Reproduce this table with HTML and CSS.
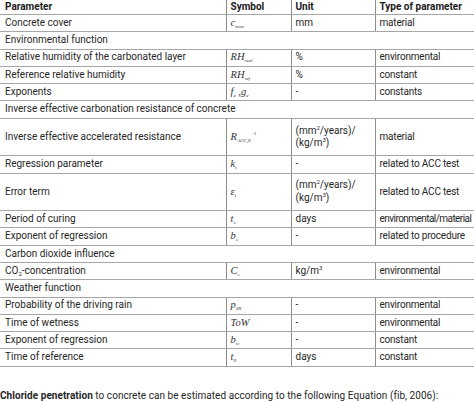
FILE: index.html
```html
<!DOCTYPE html>
<html lang="en">
<head>
<meta charset="utf-8">
<title>Carbonation model parameters</title>
<link rel="stylesheet" href="styles.css">
</head>
<body>
<table class="params">
  <colgroup>
    <col class="c-param">
    <col class="c-sym">
    <col class="c-unit">
    <col class="c-type">
  </colgroup>
  <thead>
    <tr class="head">
      <th>Parameter</th><th>Symbol</th><th>Unit</th><th class="type">Type of parameter</th>
    </tr>
  </thead>
  <tbody>
    <tr><td>Concrete cover</td><td class="sym"><i>c</i><sub>nom</sub></td><td>mm</td><td class="type">material</td></tr>
    <tr class="section"><td colspan="4">Environmental function</td></tr>
    <tr><td>Relative humidity of the carbonated layer</td><td class="sym"><i>RH</i><sub>real</sub></td><td>%</td><td class="type">environmental</td></tr>
    <tr><td>Reference relative humidity</td><td class="sym"><i>RH</i><sub>ref</sub></td><td>%</td><td class="type">constant</td></tr>
    <tr><td>Exponents</td><td class="sym"><i>f</i><sub>e</sub> <i>,g</i><sub>e</sub></td><td>-</td><td class="type">constants</td></tr>
    <tr class="section"><td colspan="4">Inverse effective carbonation resistance of concrete</td></tr>
    <tr class="tall"><td>Inverse effective accelerated resistance</td><td class="sym"><i>R</i><sub>ACC,0</sub><sup>-1</sup></td><td>(mm<sup>2</sup>/years)/<br>(kg/m<sup>3</sup>)</td><td class="type">material</td></tr>
    <tr><td>Regression parameter</td><td class="sym"><i>k</i><sub>t</sub></td><td>-</td><td class="type">related to ACC test</td></tr>
    <tr class="tall"><td>Error term</td><td class="sym"><i>ε</i><sub>t</sub></td><td>(mm<sup>2</sup>/years)/<br>(kg/m<sup>3</sup>)</td><td class="type">related to ACC test</td></tr>
    <tr><td>Period of curing</td><td class="sym"><i>t</i><sub>c</sub></td><td>days</td><td class="type tight">environmental/material</td></tr>
    <tr><td>Exponent of regression</td><td class="sym"><i>b</i><sub>c</sub></td><td>-</td><td class="type">related to procedure</td></tr>
    <tr class="section"><td colspan="4">Carbon dioxide influence</td></tr>
    <tr><td>CO<sub class="chem">2</sub>-concentration</td><td class="sym"><i>C</i><sub>s</sub></td><td>kg/m<sup>3</sup></td><td class="type">environmental</td></tr>
    <tr class="section"><td colspan="4">Weather function</td></tr>
    <tr><td>Probability of the driving rain</td><td class="sym"><i>p</i><sub>SR</sub></td><td>-</td><td class="type">environmental</td></tr>
    <tr><td>Time of wetness</td><td class="sym"><i>ToW</i></td><td>-</td><td class="type">environmental</td></tr>
    <tr><td>Exponent of regression</td><td class="sym"><i>b</i><sub>w</sub></td><td>-</td><td class="type">constant</td></tr>
    <tr><td>Time of reference</td><td class="sym"><i>t</i><sub>0</sub></td><td>days</td><td class="type">constant</td></tr>
  </tbody>
</table>
<p class="note"><b>Chloride penetration</b> to concrete can be estimated according to the following Equation (fib, 2006):</p>
</body>
</html>
```

FILE: styles.css
```css
html, body {
  margin: 0;
  padding: 0;
  background: #ffffff;
}

body {
  width: 474px;
  height: 402px;
  overflow: hidden;
  font-family: "Roboto", "Open Sans", sans-serif;
  font-size: 10px;
  color: #262626;
}

.params {
  width: 474px;
  border-collapse: collapse;
  table-layout: fixed;
}

.c-param { width: 226px; }
.c-sym { width: 65px; }
.c-unit { width: 84px; }
.c-type { width: 99px; }

.params th,
.params td {
  padding: 0 0 0 4px;
  vertical-align: middle;
  text-align: left;
  line-height: 12.5px;
  border-bottom: 1px solid #a6a6a6;
  border-left: 1px solid #8c8c8c;
  white-space: nowrap;
}

.params th:first-child,
.params td:first-child {
  padding-left: 5px;
  border-left: none;
}

.params td.type {
  letter-spacing: -0.2px;
}

.params td.tight {
  letter-spacing: -0.55px;
}

.head th {
  height: 14px;
  font-weight: 700;
  color: #1a1a1a;
}

.params tbody tr td {
  height: 16.3px;
}

.params tbody tr.tall td {
  height: 36.5px;
}

.section td {
  border-left: none;
}

.params td.sym {
  font-family: "Liberation Serif", "DejaVu Serif", serif;
  font-size: 10.5px;
  color: #333333;
}

.sym i {
  font-style: italic;
}

.sym sub {
  font-size: 5px;
  vertical-align: -2px;
  line-height: 0;
  font-style: italic;
}

.sym sup {
  font-size: 5px;
  vertical-align: 5px;
  line-height: 0;
  font-style: italic;
  margin-left: 2px;
}

td > sup {
  font-size: 6px;
  vertical-align: 4px;
  line-height: 0;
}

sub.chem {
  font-size: 6px;
  vertical-align: -2px;
  line-height: 0;
}

.note {
  margin: 22px 0 0 0;
  font-size: 10px;
  line-height: 13px;
  letter-spacing: 0.05px;
  color: #262626;
}

.note b {
  font-weight: 700;
}
```
